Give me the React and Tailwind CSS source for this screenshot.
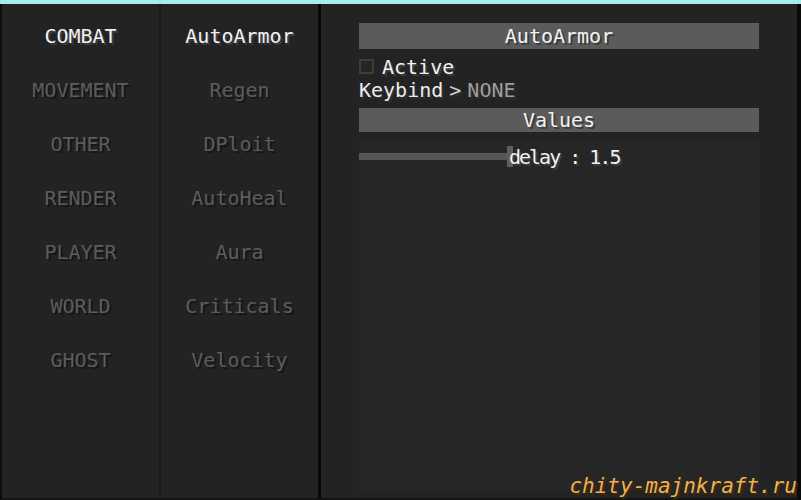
import React from "react";

const font = { fontFamily: '"DejaVu Sans Mono", "Liberation Mono", monospace' };

const cats = ["COMBAT", "MOVEMENT", "OTHER", "RENDER", "PLAYER", "WORLD", "GHOST"];
const mods = ["AutoArmor", "Regen", "DPloit", "AutoHeal", "Aura", "Criticals", "Velocity"];

function Item({ label, active }) {
  return (
    <div className="h-[54px] flex items-center justify-center">
      <span
        className={
          active
            ? "text-[#f2f2f2] [text-shadow:2px_2px_0_#3c3c3c]"
            : "text-[#5c5c5c] [text-shadow:2px_2px_0_#161616]"
        }
      >
        {label}
      </span>
    </div>
  );
}

export default function App() {
  return (
    <div
      className="relative w-[801px] h-[500px] bg-[#232323] overflow-hidden text-[20px] leading-[20px]"
      style={font}
    >
      <div className="h-[4px] bg-[#a3efee]" />
      <div className="flex h-[496px] border-l-2 border-r-4 border-b-2 border-l-[#0c0c0c] border-r-[#0a0a0a] border-b-[#141414]">
        <div className="w-[157px] pt-[5px] flex flex-col">
          {cats.map((c, i) => (
            <Item key={c} label={c} active={i === 0} />
          ))}
        </div>
        <div className="w-[2px] bg-[#1a1a1a]" />
        <div className="w-[157px] pt-[5px] flex flex-col">
          {mods.map((m, i) => (
            <Item key={m} label={m} active={i === 0} />
          ))}
        </div>
        <div className="w-[3px] bg-[#080808]" />
        <div className="flex-1 flex flex-col px-[38px] pt-[19px]">
          <div className="h-[26px] bg-[#5b5b5b] flex items-center justify-center text-[#f2f2f2] [text-shadow:2px_2px_0_#3c3c3c]">
            AutoArmor
          </div>
          <div className="mt-[10px] h-[15px] flex items-center gap-[8px]">
            <div className="w-[15px] h-[15px] shrink-0 border-2 border-[#3d3d3d] bg-[#262626]" />
            <span className="text-[#f2f2f2] [text-shadow:2px_2px_0_#3c3c3c]">Active</span>
          </div>
          <div className="mt-[6px] h-[20px] flex items-center gap-[6px] [text-shadow:2px_2px_0_#2e2e2e]">
            <span className="text-[#ececec]">Keybind</span>
            <span className="text-[#cfcfcf]">&gt;</span>
            <span className="text-[#9e9e9e]">NONE</span>
          </div>
          <div className="mt-[8px] h-[24px] bg-[#5b5b5b] flex items-center justify-center text-[#f2f2f2] [text-shadow:2px_2px_0_#3c3c3c]">
            Values
          </div>
          <div className="flex-1 mt-[7px] mb-[8px] bg-[#262626] flex flex-col">
            <div className="mt-[7px] h-[21px] flex items-center">
              <div className="w-[148px] h-[7px] bg-[#555555]" />
              <div className="w-[6px] h-[21px] bg-[#5e5e5e]" />
              <span className="-ml-[4px] text-[#f2f2f2] [text-shadow:2px_2px_0_#3c3c3c] tracking-[-2px]">
                delay : 1.5
              </span>
            </div>
          </div>
        </div>
      </div>
      <div className="absolute right-[4px] bottom-[2px] text-[21px] leading-[24px] italic text-[#f0b04e] [text-shadow:2px_2px_0_#3c2a10]">
        chity-majnkraft.ru
      </div>
    </div>
  );
}
